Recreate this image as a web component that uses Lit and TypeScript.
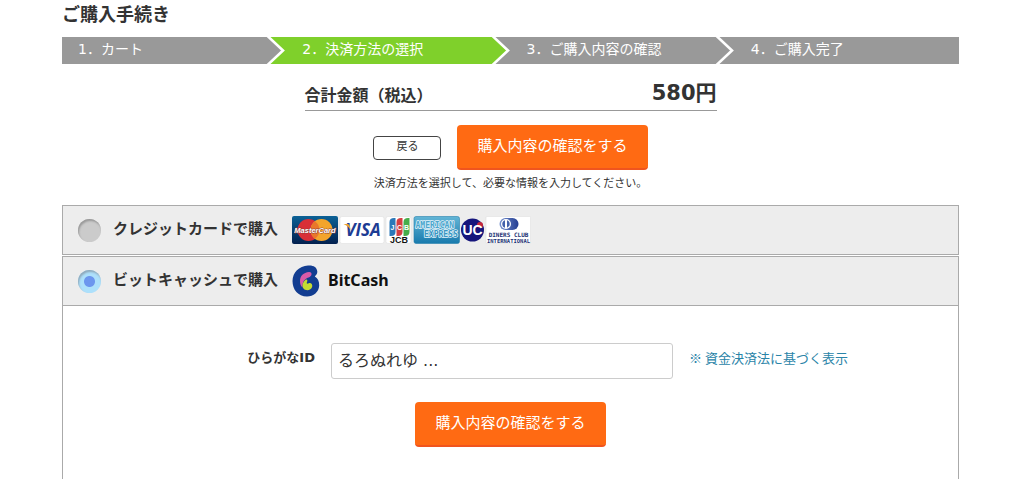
import { LitElement, html, css, svg } from 'lit';
import { customElement, state } from 'lit/decorators.js';

const GREY = '#999999';
const GREEN = '#7fd02b';

interface Step {
  label: string;
  current?: boolean;
}

const STEPS: Step[] = [
  { label: '1．カート' },
  { label: '2．決済方法の選択', current: true },
  { label: '3．ご購入内容の確認' },
  { label: '4．ご購入完了' },
];

const colorOf = (step: Step) => (step.current ? GREEN : GREY);

@customElement('checkout-steps')
export class CheckoutSteps extends LitElement {
  static styles = css`
    :host { display: block; }
    .steps {
      display: grid;
      grid-template-columns: repeat(4, 1fr);
      margin: 0;
      padding: 0;
      list-style: none;
      color: #fff;
      font-size: 14px;
      line-height: 27px;
    }
    .step {
      display: flex;
      justify-content: space-between;
      padding-left: 16px;
      background: #999999;
      white-space: nowrap;
    }
    .current { background: #7fd02b; }
    .label { height: 27px; line-height: 25px; }
    .arrow { display: block; flex: none; width: 20px; height: 27px; }
  `;

  render() {
    return html`<ol class="steps">
      ${STEPS.map((step, i) => {
        const next = STEPS[i + 1];
        return html`<li class="step ${step.current ? 'current' : ''}">
          <span class="label">${step.label}</span>
          ${next
            ? html`<svg class="arrow" viewBox="0 0 20 27" aria-hidden="true">
                ${svg`<path d="M2 0H21V27H2L16 13.5Z" fill=${colorOf(next)} />
                <path d="M1 -1.5L17 13.5L1 28.5" fill="none" stroke="#fff" stroke-width="2.6" />`}
              </svg>`
            : ''}
        </li>`;
      })}
    </ol>`;
  }
}

@customElement('card-logos')
export class CardLogos extends LitElement {
  static styles = css`
    :host { display: block; }
    .logos { display: block; width: 240px; height: 28px; }
    .sans { font-family: "Liberation Sans", sans-serif; font-weight: 700; }
    .visa { font-family: "Open Sans", sans-serif; font-weight: 700; font-style: italic; }
    .pixel { font-family: "DejaVu Sans Mono", monospace; font-weight: 700; }
    .outlined { paint-order: stroke; stroke-linejoin: round; }
  `;

  render() {
    return html`<svg class="logos" viewBox="0 0 240 28" role="img" aria-label="MasterCard, VISA, JCB, American Express, UC, Diners Club International">
      <defs>
        <linearGradient id="navy" x1="0" y1="0" x2="0" y2="1">
          <stop offset="0" stop-color="#0b6196" /><stop offset="1" stop-color="#02204f" />
        </linearGradient>
        <linearGradient id="sky" x1="0" y1="0" x2="0" y2="1">
          <stop offset="0" stop-color="#62b5d6" /><stop offset="1" stop-color="#187aad" />
        </linearGradient>
        <linearGradient id="dc" x1="0" y1="0" x2="1" y2="0">
          <stop offset="0" stop-color="#7792cf" /><stop offset="1" stop-color="#233d92" />
        </linearGradient>
      </defs>

      <rect x="0" y="0" width="46" height="28" rx="2" fill="url(#navy)" />
      <circle cx="16.500" cy="14" r="11" fill="#d92f37" />
      <circle cx="29.500" cy="14" r="11" fill="#f3a42c" />
      <path d="M23 5.2A11 11 0 0 1 23 22.8A11 11 0 0 1 23 5.2Z" fill="#e9772b" />
      <text x="23" y="17" text-anchor="middle" class="sans outlined" font-style="italic" font-size="7.500" fill="#fff" stroke="#8a3a35" stroke-width="0.8">MasterCard</text>

      <rect x="48" y="0.5" width="44" height="27" rx="2" fill="#fff" stroke="#e0e0e0" stroke-width="0.6" />
      <text x="71" y="20" text-anchor="middle" class="visa" font-size="17" fill="#1d3c94">VISA</text>
      <path d="M51.500 8H55.500Q57.300 8.100 57.700 9.700L58.600 14Q56.500 10 51.500 8Z" fill="#eda42f" />

      <rect x="94" y="0.5" width="25" height="27" rx="2" fill="#fff" stroke="#e0e0e0" stroke-width="0.6" />
      <path d="M97.500 6Q97.500 2 102 2H103.500V16Q103.500 20 99 20H97.500Z" fill="#2b78b8" />
      <path d="M104.500 6Q104.500 2 109 2H110.500V16Q110.500 20 106 20H104.500Z" fill="#d43f43" />
      <path d="M111.500 6Q111.500 2 116 2H117.500V16Q117.500 20 113 20H111.500Z" fill="#47ad4a" />
      <text x="100.500" y="14" text-anchor="middle" class="sans" font-size="7" fill="#fff">J</text>
      <text x="107.500" y="14" text-anchor="middle" class="sans" font-size="7" fill="#fff">C</text>
      <text x="114.500" y="14" text-anchor="middle" class="sans" font-size="7" fill="#fff">B</text>
      <text x="107" y="26.500" text-anchor="middle" class="sans" font-size="9" fill="#111">JCB</text>

      <rect x="122" y="0.5" width="45.500" height="27" rx="2" fill="url(#sky)" stroke="#2682ac" stroke-width="0.6" />
      <text x="123.500" y="11.500" class="pixel outlined" font-size="8" fill="#4ba6cd" stroke="#e4f4fb" stroke-width="1.4">AMERICAN</text>
      <text x="132" y="21" class="pixel outlined" font-size="8" fill="#3795c2" stroke="#e4f4fb" stroke-width="1.4">EXPRESS</text>

      <circle cx="180.500" cy="14" r="11.500" fill="#16167c" />
      <circle cx="188" cy="9" r="3" fill="#c3263c" />
      <text x="180.500" y="19" text-anchor="middle" class="sans" font-size="14" fill="#fff">UC</text>

      <rect x="194" y="0.5" width="44.500" height="27" rx="1" fill="#fff" stroke="#e0e0e0" stroke-width="0.6" />
      <rect x="207.500" y="2" width="19" height="12" rx="6" fill="url(#dc)" />
      <circle cx="214" cy="8" r="5" fill="#fff" />
      <path d="M213 4.200A4 4 0 0 0 213 11.800ZM215 4.200A4 4 0 0 1 215 11.800Z" fill="#4260ab" />
      <text x="216.500" y="20.500" text-anchor="middle" class="pixel" font-size="6" fill="#1d3273">DINERS CLUB</text>
      <text x="216.500" y="26.500" text-anchor="middle" class="pixel" font-size="5.500" fill="#1d3273">INTERNATIONAL</text>
    </svg>`;
  }
}

@customElement('bitcash-logo')
export class BitcashLogo extends LitElement {
  static styles = css`
    :host { display: flex; align-items: center; gap: 8px; }
    .mark { display: block; width: 28px; height: 32px; }
    .name {
      color: #111;
      font-family: "Noto Sans", sans-serif;
      font-size: 16px;
      font-weight: 700;
      height: 32px;
      line-height: 30px;
    }
  `;

  render() {
    return html`<svg class="mark" viewBox="0 0 28 32" aria-hidden="true">
        <path d="M16 0.500C21 0 25 2 25.300 6.500C25.400 8.500 24.300 10 22.800 11.500C25.800 13 27.300 16.500 27.200 20.500C27 27 21.500 31.500 15 31.500C6 31.500 0.500 24.500 0.500 16C0.500 7.500 7 1 16 0.500Z" fill="#123d91" />
        <path d="M17 7C11.500 7.500 8 11 8 16C8 19 8.700 21 10.500 22.500C10 17.500 12.500 13.800 16.500 12.500C20.500 11.200 20.500 6.700 17 7Z" fill="#d85ba8" />
        <path d="M14 14.500C10.500 17 9.700 20.500 11.300 23.300C13.500 26.500 19.200 25.700 20.200 21.800C20.800 18.700 18.300 17.200 16.300 18.500C15 19 14.300 18.200 15 17C15.800 15.500 15.200 14 14 14.500Z" fill="#c5dc32" />
      </svg>
      <span class="name">BitCash</span>`;
  }
}

@customElement('app-root')
export class AppRoot extends LitElement {
  @state() private method: 'card' | 'bitcash' = 'bitcash';

  static styles = css`
    :host {
      box-sizing: border-box;
      display: flex;
      flex-direction: column;
      min-height: 100vh;
      padding: 0 65px 0 62px;
      background: #fff;
      color: #333;
      font-family: "DejaVu Sans", "Noto Sans CJK JP", sans-serif;
    }
    * { box-sizing: border-box; }
    .title {
      margin: 0 0 7px;
      font-size: 18px;
      font-weight: 700;
      line-height: 30px;
    }
    .summary {
      display: flex;
      flex-direction: column;
      align-items: center;
      padding-top: 14px;
    }
    .total {
      display: flex;
      justify-content: space-between;
      align-items: center;
      width: 100%;
      max-width: 412px;
      margin-bottom: 14px;
      border-bottom: 1px solid #999;
      font-weight: 700;
      line-height: 32px;
    }
    .total-label { height: 32px; padding-top: 2px; font-size: 16px; line-height: 32px; }
    .total-price { height: 32px; font-size: 21px; line-height: 30px; }
    .actions { display: flex; align-items: center; gap: 16px; }
    button { font-family: inherit; cursor: pointer; }
    .back {
      width: 68px;
      height: 24px;
      padding: 0 0 2px;
      border: 1px solid #444;
      border-radius: 4px;
      background: #fff;
      color: #333;
      font-size: 11px;
      line-height: 20px;
    }
    .confirm {
      height: 45px;
      padding: 0 20px 2px;
      border: 0;
      border-bottom: 2px solid #f0541e;
      border-radius: 4px;
      background: #ff6a13;
      color: #fff;
      font-size: 15px;
      line-height: 40px;
    }
    .note { margin: 4px 0 11px; font-size: 11px; line-height: 20px; }
    .options {
      display: flex;
      flex: 1;
      flex-direction: column;
      gap: 1px;
      margin: 0;
      padding: 0;
      border: 0;
    }
    .option {
      display: flex;
      align-items: center;
      height: 50px;
      padding-left: 15px;
      border: 1px solid #aaa;
      background: #ededed;
      font-size: 15px;
      font-weight: 700;
      line-height: 24px;
    }
    .option input {
      flex: none;
      width: 23px;
      height: 23px;
      margin: 0 12px 0 0;
      border: 0;
      border-radius: 50%;
      appearance: none;
      background: #cbcbcb;
      box-shadow: inset 1px 2px 2px #999;
    }
    .option input:checked {
      background: radial-gradient(circle, #6c96ee 0 5px, #ade0fb 6px);
      box-shadow: inset 1px 2px 2px #8fa9bb;
    }
    .option-name { min-width: 179px; height: 24px; line-height: 22px; }
    .selected { display: flex; flex: 1; flex-direction: column; }
    .details {
      flex: 1;
      border: solid #aaa;
      border-width: 0 1px;
      padding: 37px 0 32px;
    }
    .field {
      display: grid;
      grid-template-columns: 252px minmax(0, 342px) auto;
      column-gap: 16px;
      align-items: center;
      margin-bottom: 23px;
    }
    .field-label {
      padding-bottom: 6px;
      font-size: 13px;
      font-weight: 700;
      line-height: 24px;
      text-align: right;
    }
    .field-input {
      width: 100%;
      height: 36px;
      padding: 0 6px 4px;
      border: 1px solid #ccc;
      border-radius: 3px;
      background: #fff;
      color: #333;
      font-family: inherit;
      font-size: 16px;
    }
    .law {
      padding-bottom: 6px;
      color: #2a84a8;
      font-family: "Noto Sans CJK JP", sans-serif;
      font-size: 13px;
      line-height: 24px;
      text-decoration: none;
      white-space: nowrap;
    }
    .submit { display: flex; justify-content: center; }
  `;

  render() {
    return html`
      <h1 class="title">ご購入手続き</h1>
      <checkout-steps></checkout-steps>
      <section class="summary">
        <div class="total">
          <span class="total-label">合計金額（税込）</span>
          <span class="total-price">580円</span>
        </div>
        <div class="actions">
          <button class="back" type="button">戻る</button>
          <button class="confirm" type="button">購入内容の確認をする</button>
        </div>
        <p class="note">決済方法を選択して、必要な情報を入力してください。</p>
      </section>
      <div class="options" role="radiogroup">
        <label class="option">
          <input type="radio" name="method" .checked=${this.method === 'card'} @change=${() => (this.method = 'card')} />
          <span class="option-name">クレジットカードで購入</span>
          <card-logos></card-logos>
        </label>
        <div class="selected">
          <label class="option">
            <input type="radio" name="method" .checked=${this.method === 'bitcash'} @change=${() => (this.method = 'bitcash')} />
            <span class="option-name">ビットキャッシュで購入</span>
            <bitcash-logo></bitcash-logo>
          </label>
          <div class="details">
            <div class="field">
              <label class="field-label" for="hiragana-id">ひらがなID</label>
              <input class="field-input" id="hiragana-id" type="text" value="るろぬれゆ ..." />
              <a class="law" href="#law">※ 資金決済法に基づく表示</a>
            </div>
            <div class="submit">
              <button class="confirm" type="button">購入内容の確認をする</button>
            </div>
          </div>
        </div>
      </div>
    `;
  }
}
